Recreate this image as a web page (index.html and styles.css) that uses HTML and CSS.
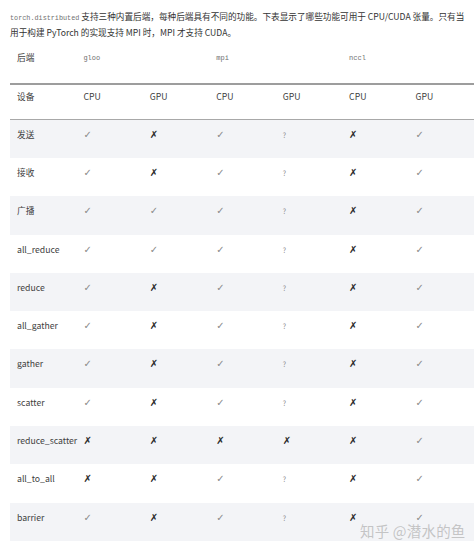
FILE: index.html
```html
<!DOCTYPE html>
<html lang="zh-CN">
<head>
<meta charset="utf-8">
<title>torch.distributed backends</title>
<link rel="stylesheet" href="styles.css">
</head>
<body>
<div class="page">
  <p class="intro"><code class="mono">torch.distributed</code> 支持三种内置后端，每种后端具有不同的功能。下表显示了哪些功能可用于 CPU/CUDA 张量。只有当<br>用于构建 PyTorch 的实现支持 MPI 时，MPI 才支持 CUDA。</p>
  <table class="grid">
    <thead>
      <tr class="row-backend">
        <th>后端</th>
        <th colspan="2"><code class="mono-h">gloo</code></th>
        <th colspan="2"><code class="mono-h">mpi</code></th>
        <th colspan="2"><code class="mono-h">nccl</code></th>
      </tr>
      <tr class="row-device">
        <th>设备</th><th>CPU</th><th>GPU</th><th>CPU</th><th>GPU</th><th>CPU</th><th>GPU</th>
      </tr>
    </thead>
    <tbody>
      <tr class="odd"><td>发送</td><td class="y">✓</td><td class="n">✗</td><td class="y">✓</td><td class="q">?</td><td class="n">✗</td><td class="y">✓</td></tr>
      <tr><td>接收</td><td class="y">✓</td><td class="n">✗</td><td class="y">✓</td><td class="q">?</td><td class="n">✗</td><td class="y">✓</td></tr>
      <tr class="odd"><td>广播</td><td class="y">✓</td><td class="y">✓</td><td class="y">✓</td><td class="q">?</td><td class="n">✗</td><td class="y">✓</td></tr>
      <tr><td>all_reduce</td><td class="y">✓</td><td class="y">✓</td><td class="y">✓</td><td class="q">?</td><td class="n">✗</td><td class="y">✓</td></tr>
      <tr class="odd"><td>reduce</td><td class="y">✓</td><td class="n">✗</td><td class="y">✓</td><td class="q">?</td><td class="n">✗</td><td class="y">✓</td></tr>
      <tr><td>all_gather</td><td class="y">✓</td><td class="n">✗</td><td class="y">✓</td><td class="q">?</td><td class="n">✗</td><td class="y">✓</td></tr>
      <tr class="odd"><td>gather</td><td class="y">✓</td><td class="n">✗</td><td class="y">✓</td><td class="q">?</td><td class="n">✗</td><td class="y">✓</td></tr>
      <tr><td>scatter</td><td class="y">✓</td><td class="n">✗</td><td class="y">✓</td><td class="q">?</td><td class="n">✗</td><td class="y">✓</td></tr>
      <tr class="odd"><td>reduce_scatter</td><td class="n">✗</td><td class="n">✗</td><td class="n">✗</td><td class="n">✗</td><td class="n">✗</td><td class="y">✓</td></tr>
      <tr><td>all_to_all</td><td class="n">✗</td><td class="n">✗</td><td class="y">✓</td><td class="q">?</td><td class="n">✗</td><td class="y">✓</td></tr>
      <tr class="odd"><td>barrier</td><td class="y">✓</td><td class="n">✗</td><td class="y">✓</td><td class="q">?</td><td class="n">✗</td><td class="y">✓</td></tr>
    </tbody>
  </table>
  <div class="watermark">知乎 @潜水的鱼</div>
</div>
</body>
</html>
```
FILE: styles.css
```css
html, body {
  margin: 0;
  padding: 0;
  background: #ffffff;
}
body {
  font-family: "Noto Sans CJK SC", "Noto Sans", sans-serif;
  color: #404040;
  overflow: hidden;
}
.page {
  position: relative;
  width: 474px;
  height: 549px;
  padding-left: 10px;
  box-sizing: border-box;
}
.intro {
  margin: 0;
  padding-top: 9px;
  font-size: 8.65px;
  line-height: 14px;
  white-space: nowrap;
  color: #333333;
}
.mono {
  font-family: "Liberation Mono", "DejaVu Sans Mono", monospace;
  font-size: 6.8px;
  color: #707070;
}
.grid {
  margin-top: 5px;
  width: 465px;
  table-layout: fixed;
  border-collapse: collapse;
  font-size: 8.7px;
  line-height: 14px;
}
.grid th, .grid td {
  text-align: left;
  font-weight: normal;
  padding: 0 0 0 7px;
  white-space: nowrap;
}
.row-backend th {
  padding-top: 6px;
  padding-bottom: 18px;
  border-bottom: 2px solid #9d9d9d;
}
.row-device th {
  padding-top: 5px;
  padding-bottom: 15px;
  border-bottom: 1px solid #a8a8a8;
}
.mono-h {
  font-family: "Liberation Mono", "DejaVu Sans Mono", monospace;
  font-size: 7px;
  color: #707070;
}
.grid tbody td {
  height: 38.3px;
  box-sizing: border-box;
  padding-top: 8px;
  padding-bottom: 16px;
  vertical-align: top;
}
.grid tbody tr.odd td {
  background: #f3f4f7;
}
.grid td.y {
  font-family: "DejaVu Sans", sans-serif;
  color: #8a8a8a;
  font-size: 10px;
  line-height: 8px;
  padding-top: 11px;
}
.grid td.n {
  font-family: "DejaVu Sans", sans-serif;
  color: #2a2a2a;
  font-weight: bold;
  font-size: 10px;
}
.grid td.q {
  color: #8a8a8a;
  font-size: 7px;
}
.watermark {
  position: absolute;
  left: 360px;
  top: 524px;
  font-size: 14.5px;
  line-height: 13px;
  color: rgba(175, 175, 175, 0.7);
  letter-spacing: 0.2px;
  white-space: nowrap;
}
```
